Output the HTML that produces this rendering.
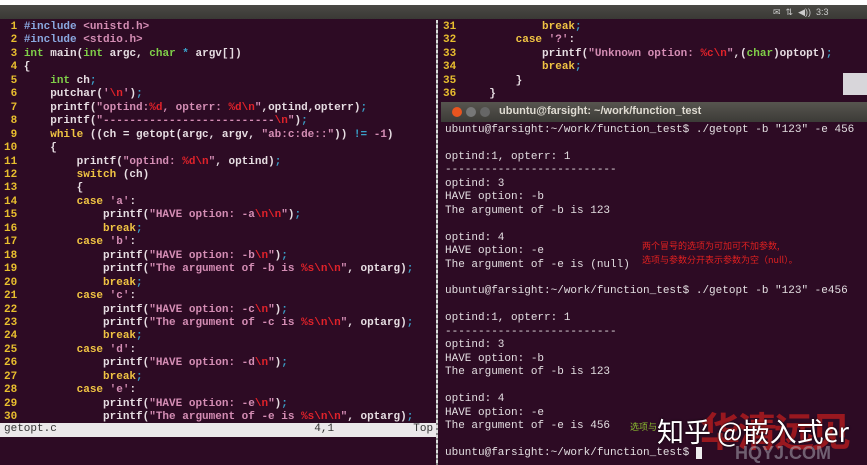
<!DOCTYPE html>
<html><head><meta charset="utf-8"><style>
*{margin:0;padding:0}
html,body{width:867px;height:465px;overflow:hidden}
body{background:#fff;position:relative;font-family:"Liberation Mono",monospace}
.bg{position:absolute;left:0;top:6px;width:867px;height:459px;background:#2d0b24}
.top{position:absolute;left:0;top:5px;width:867px;height:14px;background:linear-gradient(#4a4945,#3a3935)}
pre{position:absolute;font-family:"Liberation Mono",monospace;font-size:11px;line-height:13.45px;font-weight:bold;color:#e6dde2;white-space:pre}
.n{color:#e8be2e}.k{color:#f0c443}.t{color:#7fcf48}.p{color:#8aa8e0}.s{color:#d48db4}.r{color:#e0222a}.c{color:#3aa0c8}
div{white-space:nowrap}
</style></head><body>
<div class="bg"></div>
<div class="top"></div>
<div style="position:absolute;left:773px;top:7px;color:#ccc;font:9px 'Liberation Sans',sans-serif">✉ &nbsp;⇅ &nbsp;◀)) &nbsp;3:3</div>
<pre style="left:4px;top:21px"><span class="n"> 1</span> <span class="p">#include</span> <span class="s">&lt;unistd.h&gt;</span>
<span class="n"> 2</span> <span class="p">#include</span> <span class="s">&lt;stdio.h&gt;</span>
<span class="n"> 3</span> <span class="t">int</span> main(<span class="t">int</span> argc, <span class="t">char</span> <span class="c">*</span> argv[])
<span class="n"> 4</span> {
<span class="n"> 5</span>     <span class="t">int</span> ch<span class="c">;</span>
<span class="n"> 6</span>     putchar(<span class="s">'</span><span class="r">\n</span><span class="s">'</span>)<span class="c">;</span>
<span class="n"> 7</span>     printf(<span class="s">"optind:</span><span class="r">%d</span><span class="s">, opterr: </span><span class="r">%d\n</span><span class="s">"</span>,optind,opterr)<span class="c">;</span>
<span class="n"> 8</span>     printf(<span class="s">"--------------------------</span><span class="r">\n</span><span class="s">"</span>)<span class="c">;</span>
<span class="n"> 9</span>     <span class="k">while</span> ((ch = getopt(argc, argv, <span class="s">"ab:c:de::"</span>)) <span class="c">!=</span> <span class="s">-1</span>)
<span class="n">10</span>     {
<span class="n">11</span>         printf(<span class="s">"optind: </span><span class="r">%d\n</span><span class="s">"</span>, optind)<span class="c">;</span>
<span class="n">12</span>         <span class="k">switch</span> (ch)
<span class="n">13</span>         {
<span class="n">14</span>         <span class="k">case</span> <span class="s">'a'</span>:
<span class="n">15</span>             printf(<span class="s">"HAVE option: -a</span><span class="r">\n\n</span><span class="s">"</span>)<span class="c">;</span>
<span class="n">16</span>             <span class="k">break</span><span class="c">;</span>
<span class="n">17</span>         <span class="k">case</span> <span class="s">'b'</span>:
<span class="n">18</span>             printf(<span class="s">"HAVE option: -b</span><span class="r">\n</span><span class="s">"</span>)<span class="c">;</span>
<span class="n">19</span>             printf(<span class="s">"The argument of -b is </span><span class="r">%s\n\n</span><span class="s">"</span>, optarg)<span class="c">;</span>
<span class="n">20</span>             <span class="k">break</span><span class="c">;</span>
<span class="n">21</span>         <span class="k">case</span> <span class="s">'c'</span>:
<span class="n">22</span>             printf(<span class="s">"HAVE option: -c</span><span class="r">\n</span><span class="s">"</span>)<span class="c">;</span>
<span class="n">23</span>             printf(<span class="s">"The argument of -c is </span><span class="r">%s\n\n</span><span class="s">"</span>, optarg)<span class="c">;</span>
<span class="n">24</span>             <span class="k">break</span><span class="c">;</span>
<span class="n">25</span>         <span class="k">case</span> <span class="s">'d'</span>:
<span class="n">26</span>             printf(<span class="s">"HAVE option: -d</span><span class="r">\n</span><span class="s">"</span>)<span class="c">;</span>
<span class="n">27</span>             <span class="k">break</span><span class="c">;</span>
<span class="n">28</span>         <span class="k">case</span> <span class="s">'e'</span>:
<span class="n">29</span>             printf(<span class="s">"HAVE option: -e</span><span class="r">\n</span><span class="s">"</span>)<span class="c">;</span>
<span class="n">30</span>             printf(<span class="s">"The argument of -e is </span><span class="r">%s\n\n</span><span class="s">"</span>, optarg)<span class="c">;</span></pre>
<div style="position:absolute;left:0;top:423px;width:436px;height:14px;background:#ebe8ea"></div>
<pre style="left:4px;top:423px;color:#333;font-weight:normal">getopt.c                                       4,1            Top</pre>
<div style="position:absolute;left:436px;top:20px;width:2px;height:445px;background:repeating-linear-gradient(#ddd 0 3px,#888 3px 5px)"></div>
<pre style="left:443px;top:21px"><span class="n">31</span>             <span class="k">break</span><span class="c">;</span>
<span class="n">32</span>         <span class="k">case</span> <span class="s">'?'</span>:
<span class="n">33</span>             printf(<span class="s">"Unknown option: </span><span class="r">%c\n</span><span class="s">"</span>,(<span class="t">char</span>)optopt)<span class="c">;</span>
<span class="n">34</span>             <span class="k">break</span><span class="c">;</span>
<span class="n">35</span>         }
<span class="n">36</span>     }</pre>
<div style="position:absolute;left:843px;top:73px;width:24px;height:22px;background:#d8d6da"></div>
<div style="position:absolute;left:441px;top:102px;width:426px;height:20px;background:linear-gradient(#57554f,#3c3b37)"></div>
<div style="position:absolute;left:452px;top:107px;width:10px;height:10px;border-radius:50%;background:#e9541f"></div>
<div style="position:absolute;left:466px;top:107px;width:10px;height:10px;border-radius:50%;background:#777"></div>
<div style="position:absolute;left:480px;top:107px;width:10px;height:10px;border-radius:50%;background:#666"></div>
<div style="position:absolute;left:499px;top:105px;color:#dfdbd2;font:bold 11px 'Liberation Sans',sans-serif">ubuntu@farsight: ~/work/function_test</div>
<pre style="left:445px;top:124px;font-weight:normal;color:#e2dde0">ubuntu@farsight:~/work/function_test$ ./getopt -b "123" -e 456

optind:1, opterr: 1
--------------------------
optind: 3
HAVE option: -b
The argument of -b is 123

optind: 4
HAVE option: -e
The argument of -e is (null)

ubuntu@farsight:~/work/function_test$ ./getopt -b "123" -e456

optind:1, opterr: 1
--------------------------
optind: 3
HAVE option: -b
The argument of -b is 123

optind: 4
HAVE option: -e
The argument of -e is 456

ubuntu@farsight:~/work/function_test$ <span style="background:#eee">&nbsp;</span></pre>
<div style="position:absolute;left:642px;top:239px;color:#e02020;font:9px 'Noto Sans CJK SC',sans-serif;line-height:14px">两个冒号的选项为可加可不加参数,<br>选项与参数分开表示参数为空（null）。</div>
<div style="position:absolute;left:630px;top:420px;color:#8bbf30;font:9px 'Noto Sans CJK SC',sans-serif">选项与</div>
<div style="position:absolute;left:700px;top:400px;color:rgba(200,30,30,0.7);font:bold 40px 'Noto Sans CJK SC',sans-serif;letter-spacing:-3px">华清远见</div>
<div style="position:absolute;left:735px;top:443px;color:rgba(180,180,190,0.5);font:bold 18px 'Liberation Sans',sans-serif">HQYJ.COM</div>
<div style="position:absolute;left:657px;top:411px;color:#fff;font:27px 'Noto Sans CJK SC',sans-serif;text-shadow:0 0 2px #000">知乎 @嵌入式er</div>
</body></html>
